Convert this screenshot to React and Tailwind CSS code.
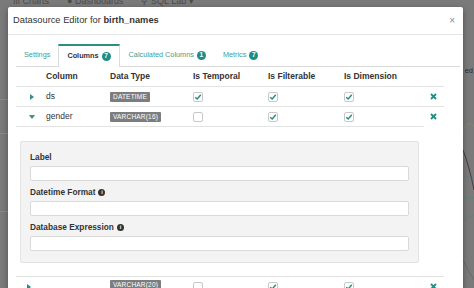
import React from "react";

const F = { fontFamily: '"Liberation Sans", Arial, sans-serif' };

function Badge({ n }) {
  return (
    <span className="inline-flex items-center justify-center w-[9px] h-[9px] rounded-full bg-[#1f8d84] text-white text-[6.5px] font-bold leading-none ml-[3px]">
      {n}
    </span>
  );
}

function Check({ on }) {
  return (
    <span className="inline-flex items-center justify-center w-[10px] h-[10px] border border-[#c8c8c8] rounded-[2px] bg-white shrink-0">
      {on && (
        <svg width="8" height="8" viewBox="0 0 8 8">
          <path d="M1.2 4.2 L3.2 6 L6.8 1.8" fill="none" stroke="#2a8f80" strokeWidth="1.5" />
        </svg>
      )}
    </span>
  );
}

function XIcon() {
  return (
    <svg width="7" height="7" viewBox="0 0 7 7">
      <path d="M1 1 L6 6 M6 1 L1 6" stroke="#1f8e83" strokeWidth="1.8" />
    </svg>
  );
}

function TypeBadge({ t }) {
  return (
    <span className="inline-block bg-[#7b7d7f] text-white text-[6.5px] leading-[10px] px-[3px] rounded-[1px] tracking-[0.2px] whitespace-nowrap">
      {t}
    </span>
  );
}

function Row({ arrow, name, type, temporal }) {
  return (
    <div className="flex items-center h-[19px] w-[428px]">
      <div className="w-[30px] shrink-0 flex justify-center pl-[2px]">
        {arrow === "right" ? (
          <svg width="4" height="6" viewBox="0 0 4 6">
            <path d="M0 0 L4 3 L0 6Z" fill="#3d8f86" />
          </svg>
        ) : (
          <svg width="6" height="4" viewBox="0 0 6 4">
            <path d="M0 0 L6 0 L3 4Z" fill="#3d8f86" />
          </svg>
        )}
      </div>
      <div className="w-[64px] shrink-0 text-[8.5px] text-[#333]">{name}</div>
      <div className="w-[83px] shrink-0 flex">
        <TypeBadge t={type} />
      </div>
      <div className="w-[75px] shrink-0 flex">
        <Check on={temporal} />
      </div>
      <div className="w-[76px] shrink-0 flex">
        <Check on />
      </div>
      <div className="w-[86px] shrink-0 flex">
        <Check on />
      </div>
      <div className="w-[12px] shrink-0 flex">
        <XIcon />
      </div>
    </div>
  );
}

function Field({ label, info }) {
  return (
    <div className="flex flex-col">
      <div className="text-[8.3px] font-bold text-[#333] h-[11px] leading-[11px] flex items-center">
        {label}
        {info && (
          <span className="inline-flex items-center justify-center w-[7px] h-[7px] rounded-full bg-[#333] text-white text-[5.5px] font-bold ml-[3px] leading-none">
            i
          </span>
        )}
      </div>
      <div className="mt-[3px] h-[15px] bg-white border border-[#d9d9d9] rounded-[2px]" />
    </div>
  );
}

export default function App() {
  return (
    <div style={F} className="relative w-[474px] h-[288px] overflow-hidden bg-[#7a7a7a]">
      {/* background page */}
      <div className="absolute left-[13px] top-[-4px] flex gap-[18px] text-[9px] leading-[10px] text-[#4a4a4a]">
        <span>ılı Charts</span>
        <span>● Dashboards</span>
        <span>⚲ SQL Lab ▾</span>
      </div>
      <div className="absolute left-0 top-[99px] w-[8px] h-px bg-[#8a8a8a]" />
      <div className="absolute left-0 top-[133px] w-[8px] h-px bg-[#8a8a8a]" />
      <div className="absolute left-0 top-[211px] w-[8px] h-px bg-[#8a8a8a]" />
      <div className="absolute left-[465px] top-[66px] text-[7px] text-[#2a2a2a]">ed</div>
      <svg className="absolute left-[463px] top-[120px]" width="11" height="168" viewBox="0 0 11 168">
        <path d="M0 30 Q6 45 11 70" stroke="#3a2a3a" strokeWidth="0.8" fill="none" />
        <path d="M0 75 Q5 80 11 78" stroke="#4f8a7a" strokeWidth="0.7" fill="none" />
        <path d="M0 55 Q6 60 11 58" stroke="#5e7a8a" strokeWidth="0.6" fill="none" />
        <path d="M0 100 Q5 98 11 95" stroke="#4f8a7a" strokeWidth="0.6" fill="none" />
        <path d="M0 10 Q5 0 11 6" stroke="#9a8a5a" strokeWidth="0.6" fill="none" />
        <path d="M0 140 Q5 150 11 160" stroke="#6a5a6a" strokeWidth="0.6" fill="none" />
      </svg>

      {/* modal */}
      <div className="absolute left-[8px] top-[7px] w-[455px] h-[300px] bg-white rounded-[2px] shadow-[0_2px_6px_rgba(0,0,0,0.35)]">
        <div className="h-[28px] flex items-center justify-between pl-[5px] pr-[8px] border-b border-[#e5e5e5]">
          <div className="text-[9.3px] text-[#333]">
            Datasource Editor for <span className="font-bold">birth_names</span>
          </div>
          <div className="text-[10px] text-[#8a8a8a] leading-none">×</div>
        </div>

        <div className="pl-[8px] pr-[3px] pt-[9px]">
          {/* tabs */}
          <div className="flex h-[23px] border-b border-[#dcdcdc] items-end">
            <div className="h-[22px] flex items-center px-[8px] text-[7.3px] text-[#3f9d93]">Settings</div>
            <div className="h-[23px] flex items-center px-[8px] text-[7.3px] text-[#333] font-bold bg-white border-t-2 border-[#2a8f84] border-x border-x-[#dcdcdc] mb-[-1px]">
              Columns <Badge n="7" />
            </div>
            <div className="h-[22px] flex items-center px-[9px] text-[7.3px] text-[#3f9d93]">
              Calculated Columns <Badge n="1" />
            </div>
            <div className="h-[22px] flex items-center px-[8px] text-[7.3px] text-[#3f9d93]">
              Metrics <Badge n="7" />
            </div>
          </div>

          {/* table header */}
          <div className="flex items-center h-[20px] border-b border-[#e3e3e3] text-[8.5px] font-bold text-[#333] w-[428px]">
            <div className="w-[30px] shrink-0" />
            <div className="w-[64px] shrink-0">Column</div>
            <div className="w-[83px] shrink-0">Data Type</div>
            <div className="w-[75px] shrink-0">Is Temporal</div>
            <div className="w-[76px] shrink-0">Is Filterable</div>
            <div className="w-[84px] shrink-0">Is Dimension</div>
          </div>
          <Row arrow="right" name="ds" type="DATETIME" temporal />
          <div className="w-[428px] border-b border-[#e3e3e3]" />
          <Row arrow="down" name="gender" type="VARCHAR(16)" temporal={false} />
          <div className="w-[408px] border-b border-[#e3e3e3]" />

          {/* expanded panel */}
          <div className="mt-[14px] ml-[4px] w-[399px] h-[122px] bg-[#f3f3f3] border border-[#e3e3e3] rounded-[2px] px-[9px] pt-[10px] flex flex-col gap-[6px]">
            <Field label="Label" />
            <Field label="Datetime Format" info />
            <Field label="Database Expression" info />
          </div>

          <div className="mt-[13px] w-[428px] border-t border-[#e3e3e3]" />
          <div className="flex items-start h-[20px] pt-[3px] w-[428px]">
            <div className="w-[30px] shrink-0 flex justify-center pt-[4px] pr-[5px]">
              <svg width="4" height="6" viewBox="0 0 4 6">
                <path d="M0 0 L4 3 L0 6Z" fill="#1f8d84" />
              </svg>
            </div>
            <div className="w-[64px] shrink-0 text-[8.5px] text-[#333] pt-[4px]">num</div>
            <div className="w-[83px] shrink-0 flex">
              <TypeBadge t="VARCHAR(20)" />
            </div>
            <div className="w-[75px] shrink-0 flex pt-[2px]"><Check on={false} /></div>
            <div className="w-[76px] shrink-0 flex pt-[2px]"><Check on /></div>
            <div className="w-[86px] shrink-0 flex pt-[2px]"><Check on /></div>
            <div className="w-[12px] shrink-0 flex pt-[3px]"><XIcon /></div>
          </div>
        </div>
      </div>
    </div>
  );
}
